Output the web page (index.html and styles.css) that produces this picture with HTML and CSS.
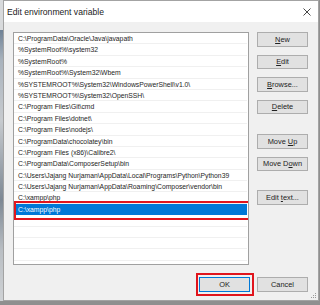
FILE: index.html
```html
<!DOCTYPE html>
<html lang="en">
    <head>
        <meta charset="UTF-8" />
        <link rel="stylesheet" href="styles.css">
        <title>Edit environment variable</title>
    </head>
    <body>
        <div class="desktop">
            <div class="edge"></div>
            <section class="window">
                <header class="titlebar">
                    <span class="title">Edit environment variable</span>
                    <svg class="close" width="8" height="8" viewBox="0 0 8 8">
                        <path d="M0.5 0.5 L7.5 7.5 M7.5 0.5 L0.5 7.5" stroke="#333" stroke-width="0.9" />
                    </svg>
                </header>
                <div class="content">
                    <div class="main">
                        <div class="list">
                            <ul>
                                <li>C:\ProgramData\Oracle\Java\javapath</li>
                                <li>%SystemRoot%\system32</li>
                                <li>%SystemRoot%</li>
                                <li>%SystemRoot%\System32\Wbem</li>
                                <li>%SYSTEMROOT%\System32\WindowsPowerShell\v1.0\</li>
                                <li>%SYSTEMROOT%\System32\OpenSSH\</li>
                                <li>C:\Program Files\Git\cmd</li>
                                <li>C:\Program Files\dotnet\</li>
                                <li>C:\Program Files\nodejs\</li>
                                <li>C:\ProgramData\chocolatey\bin</li>
                                <li>C:\Program Files (x86)\Calibre2\</li>
                                <li>C:\ProgramData\ComposerSetup\bin</li>
                                <li>C:\Users\Jajang Nurjaman\AppData\Local\Programs\Python\Python39</li>
                                <li>C:\Users\Jajang Nurjaman\AppData\Roaming\Composer\vendor\bin</li>
                                <li>C:\xampp\php</li>
                                <li class="selected">C:\xampp\php</li>
                                <li></li>
                                <li></li>
                                <li></li>
                                <li></li>
                            </ul>
                            <div class="mark mark-row"></div>
                        </div>
                        <div class="buttons">
                            <button><u>N</u>ew</button>
                            <button><u>E</u>dit</button>
                            <button><u>B</u>rowse...</button>
                            <button><u>D</u>elete</button>
                            <button class="group">Move <u>U</u>p</button>
                            <button>Move D<u>o</u>wn</button>
                            <button class="group-2">Edit <u>t</u>ext...</button>
                        </div>
                    </div>
                    <footer class="footer">
                        <span class="ok-wrap">
                            <button class="default">OK</button>
                            <span class="mark mark-ok"></span>
                        </span>
                        <button>Cancel</button>
                    </footer>
                    <svg class="grip" width="6" height="6" viewBox="0 0 6 6">
                        <rect x="4" y="0" width="1" height="1" fill="#999" />
                        <rect x="2" y="2" width="1" height="1" fill="#999" />
                        <rect x="4" y="2" width="1" height="1" fill="#999" />
                        <rect x="0" y="4" width="1" height="1" fill="#999" />
                        <rect x="2" y="4" width="1" height="1" fill="#999" />
                        <rect x="4" y="4" width="1" height="1" fill="#999" />
                    </svg>
                </div>
            </section>
        </div>
    </body>
</html>
```

FILE: styles.css
```css
body {
    margin: 0;
    background: #8f8f8f;
    font-family: "Liberation Sans", Arial, sans-serif;
    color: #222;
}

.desktop {
    display: flex;
    height: 301px;
}

.edge {
    width: 3px;
    background: linear-gradient(#d8dadc 0, #d8dadc 30px, #6f8296 30px, #a9b3bd 60px, #c7cbcf 120px, #7d8894 200px, #b9bec3 250px, #cfd2d5 301px);
}

.window {
    width: 314px;
    border: 1px solid #a3a3a3;
    display: flex;
    flex-direction: column;
    background: #f0f0f0;
}

.titlebar {
    height: 21px;
    background: white;
    display: flex;
    align-items: center;
    justify-content: space-between;
    padding: 0 7px 0 3px;
}

.title {
    font-size: 8.6px;
}

.close {
    display: block;
}

.content {
    flex: 1;
    position: relative;
    padding: 10px 10px 0 9px;
}

.main {
    display: flex;
    gap: 8px;
}

.list {
    position: relative;
    width: 234px;
    height: 231px;
    border: 1px solid #a0a0a0;
    background: white;
    overflow: hidden;
}

.list ul {
    list-style: none;
    margin: 0;
    padding: 0;
}

.list li {
    height: 11.4px;
    line-height: 11.4px;
    box-sizing: border-box;
    border-bottom: 1px solid #f0f0f0;
    padding-left: 4px;
    margin-right: 1px;
    font-size: 6.8px;
    color: #1e1e1e;
    white-space: nowrap;
    overflow: hidden;
}

.list li.selected {
    background: #0078d7;
    color: white;
    margin-left: 2px;
    padding-left: 2px;
    border-bottom-color: #0078d7;
}

.mark {
    position: absolute;
    border: 2px solid #e0151d;
    box-sizing: border-box;
}

.mark-row {
    left: 0;
    top: 168px;
    width: 236px;
    height: 19px;
}

.buttons {
    width: 51px;
    display: flex;
    flex-direction: column;
    gap: 8px;
}

button {
    height: 14.5px;
    width: 51px;
    padding: 0;
    background: #e1e1e1;
    border: 1px solid #adadad;
    font-family: "Liberation Sans", Arial, sans-serif;
    font-size: 7.4px;
    color: #222;
}

.buttons .group {
    margin-top: 12px;
}

.buttons .group-2 {
    margin-top: 11px;
}

.footer {
    display: flex;
    justify-content: flex-end;
    gap: 7px;
    margin-top: 12px;
}

.ok-wrap {
    position: relative;
    display: flex;
}

button.default {
    border-color: #0078d7;
}

.mark-ok {
    left: -3px;
    top: -4px;
    width: 58px;
    height: 23px;
}

.grip {
    position: absolute;
    right: 1px;
    bottom: 1px;
}
```
